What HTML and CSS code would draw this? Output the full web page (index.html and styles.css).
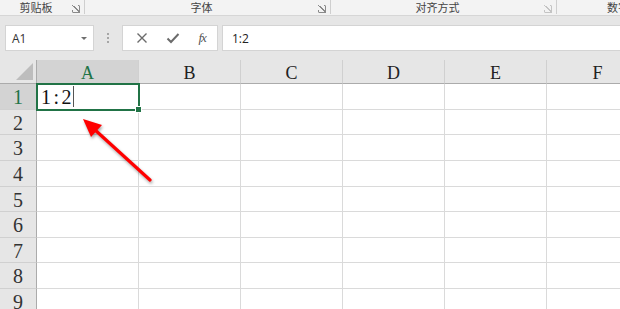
FILE: index.html
```html
<!DOCTYPE html>
<html lang="zh-CN">
<head>
  <meta charset="UTF-8">
  <title>Excel - 1:2</title>
  <link rel="stylesheet" href="styles.css">
</head>
<body>
  <!-- Ribbon group labels -->
  <div class="ribbon">
    <div class="group group-clip"><span class="group-label">剪贴板</span><span class="launcher"></span></div>
    <div class="group group-font"><span class="group-label">字体</span><span class="launcher"></span></div>
    <div class="group group-align"><span class="group-label">对齐方式</span><span class="launcher"></span></div>
    <div class="group group-num"><span class="group-label">数字</span></div>
  </div>

  <!-- Formula bar -->
  <div class="formula-band">
    <div class="name-box">
      <span>A1</span>
      <span class="dropdown"></span>
    </div>
    <div class="grip"><i></i><i></i><i></i></div>
    <div class="fx-buttons">
      <svg class="fx-icon" width="12" height="12" viewBox="0 0 12 12"><path d="M1.5 1.5 L10.5 10.5 M10.5 1.5 L1.5 10.5" stroke="#6b6b6b" stroke-width="1.4" fill="none"/></svg>
      <svg class="fx-icon" width="14" height="12" viewBox="0 0 14 12"><path d="M1.5 6.5 L5 10 L12.5 2" stroke="#6b6b6b" stroke-width="2" fill="none"/></svg>
      <span class="fx-text">fx</span>
    </div>
    <div class="formula-input">1:2</div>
  </div>

  <!-- Sheet grid -->
  <div class="sheet" id="sheet"></div>

  <!-- Annotation arrow -->
  <svg class="arrow" width="620" height="309" viewBox="0 0 620 309">
    <line x1="150" y1="180" x2="94" y2="129" stroke="#ff0000" stroke-width="3.2" stroke-linecap="round"/>
    <polygon points="83,119 102,125 91,137" fill="#ff0000"/>
  </svg>

  <script src="sheet.js"></script>
</body>
</html>
```

FILE: styles.css
```css
body {
  margin: 0;
  width: 620px;
  height: 309px;
  overflow: hidden;
  background-color: #e6e6e6;
  font-family: "Noto Sans CJK SC", "Liberation Sans", sans-serif;
  position: relative;
}

.ribbon {
  display: flex;
  height: 15px;
  background-color: #f3f3f3;
  border-bottom: 1px solid #d6d6d6;
}

.group {
  display: flex;
  flex-shrink: 0;
  align-items: center;
  border-right: 1px solid #cfcfcf;
  height: 14px;
  box-sizing: border-box;
}

.group-clip { width: 85px; }
.group-font { width: 246px; }
.group-align { width: 226px; }
.group-num { width: 130px; border-right: none; }

.group-label {
  flex: 1;
  text-align: center;
  font-size: 11px;
  line-height: 14px;
  color: #444;
}

.group-num .group-label {
  flex: none;
  margin-left: 50px;
}

.launcher {
  width: 6px;
  height: 6px;
  margin: 3px 4px 0 0;
  border: 1px solid #8a8a8a;
  border-left-color: transparent;
  border-top-color: transparent;
  background: linear-gradient(45deg, transparent 45%, #8a8a8a 45%, #8a8a8a 60%, transparent 60%);
}

.group-align .launcher {
  border-color: #c4c4c4;
  border-left-color: transparent;
  border-top-color: transparent;
  background: linear-gradient(45deg, transparent 45%, #c4c4c4 45%, #c4c4c4 60%, transparent 60%);
}

.formula-band {
  display: flex;
  align-items: stretch;
  height: 26px;
  padding: 9px 0 9px 5px;
}

.name-box {
  width: 89px;
  box-sizing: border-box;
  background-color: #fff;
  border: 1px solid #d4d4d4;
  display: flex;
  align-items: center;
  justify-content: space-between;
  padding: 0 6px 0 6px;
  font-family: "Open Sans", "Liberation Sans", sans-serif;
  font-size: 12px;
  color: #333;
}

.dropdown {
  width: 0;
  height: 0;
  border-left: 3px solid transparent;
  border-right: 3px solid transparent;
  border-top: 3px solid #6f6f6f;
}

.grip {
  width: 28px;
  display: flex;
  flex-direction: column;
  align-items: center;
  justify-content: center;
  gap: 2px;
}

.grip i {
  width: 2px;
  height: 2px;
  background-color: #a6a6a6;
}

.fx-buttons {
  width: 96px;
  box-sizing: border-box;
  background-color: #fff;
  border: 1px solid #d4d4d4;
  display: flex;
  align-items: center;
  justify-content: space-around;
  padding: 0 2px 0 4px;
}

.fx-text {
  font-family: "Liberation Serif", serif;
  font-style: italic;
  font-size: 13px;
  color: #555;
  letter-spacing: -1px;
}

.formula-input {
  flex: 1;
  margin-left: 4px;
  background-color: #fff;
  border: 1px solid #d4d4d4;
  border-right: none;
  display: flex;
  align-items: center;
  padding-left: 9px;
  font-family: "Open Sans", "Liberation Sans", sans-serif;
  font-size: 12px;
  color: #222;
}

.sheet {
  display: grid;
  grid-template-columns: 37px repeat(6, 102px);
  grid-template-rows: 24px repeat(9, 25.625px);
  background-color: #fff;
  width: 700px;
}

.cell {
  box-sizing: border-box;
  border-right: 1px solid #dadada;
  border-bottom: 1px solid #dadada;
  background-color: #fff;
  position: relative;
}

.col-head {
  background-color: #e6e6e6;
  border-right: 1px solid #d0d0d0;
  border-bottom: 1px solid #ababab;
  font-family: "Liberation Serif", serif;
  font-size: 18px;
  color: #222;
  text-align: center;
  line-height: 26px;
}

.row-head {
  background-color: #e6e6e6;
  border-right: 1px solid #ababab;
  border-bottom: 1px solid #d0d0d0;
  font-family: "Liberation Serif", serif;
  font-size: 20px;
  color: #333;
  text-align: center;
  line-height: 27px;
}

.corner {
  background-color: #e6e6e6;
  border-right: 1px solid #ababab;
  border-bottom: 1px solid #ababab;
  position: relative;
}

.corner::after {
  content: "";
  position: absolute;
  right: 3px;
  bottom: 3px;
  width: 17px;
  height: 17px;
  background-color: #bdbdbd;
  clip-path: polygon(100% 0, 100% 100%, 0 100%);
}

.active-head {
  background-color: #d3d3d3;
  color: #217346;
}

.selected {
  outline: 2px solid #217346;
  outline-offset: -1px;
  z-index: 2;
  font-family: "Liberation Serif", serif;
  font-size: 20px;
  letter-spacing: 2.5px;
  color: #111;
  padding-left: 4px;
  line-height: 27px;
}

.selected::before {
  content: "";
  position: absolute;
  left: 36px;
  top: 2px;
  bottom: 2px;
  width: 1px;
  background-color: #555;
}

.selected::after {
  content: "";
  position: absolute;
  right: -4px;
  bottom: -4px;
  width: 5px;
  height: 5px;
  background-color: #217346;
  border: 1px solid #fff;
}

.arrow {
  position: absolute;
  left: 0;
  top: 0;
  pointer-events: none;
  filter: drop-shadow(1px 2px 1.5px rgba(0, 0, 0, 0.35));
}
```

FILE: sheet.js
```js
// Build the visible part of the worksheet
const sheet = document.getElementById('sheet');
const cols = ['A', 'B', 'C', 'D', 'E', 'F'];

function addCell(className, text) {
  const cell = document.createElement('div');
  cell.className = className;
  if (text) cell.textContent = text;
  sheet.appendChild(cell);
}

addCell('corner');
cols.forEach(c => addCell('cell col-head' + (c === 'A' ? ' active-head' : ''), c));

for (let r = 1; r <= 9; r++) {
  addCell('cell row-head' + (r === 1 ? ' active-head' : ''), String(r));
  cols.forEach(c => {
    if (r === 1 && c === 'A') {
      addCell('cell selected', '1:2');
    } else {
      addCell('cell');
    }
  });
}
```
